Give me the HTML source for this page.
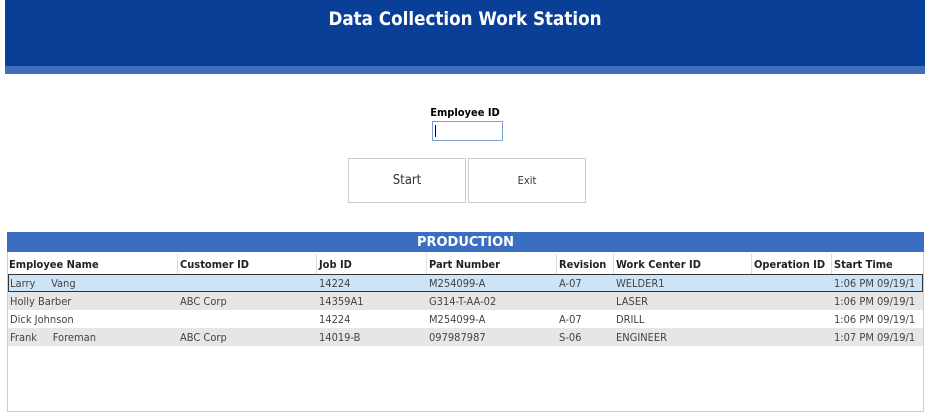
<!DOCTYPE html>
<html><head><style>
*{margin:0;padding:0;box-sizing:border-box}
body{width:930px;height:405px;background:#fff;position:relative;overflow:hidden;font-family:"DejaVu Sans","Liberation Sans",sans-serif}
.hdr{position:absolute;left:5px;top:0;width:920px;height:66px;background:#0a3f98}
.hdr2{position:absolute;left:5px;top:66px;width:920px;height:8px;background:#3f6ebf}
.title{position:absolute;left:0;width:930px;top:8px;text-align:center;color:#fff;font-size:19px;font-family:"DejaVu Sans Condensed","DejaVu Sans",sans-serif;font-weight:bold;transform:scaleX(0.98)}
.lbl{position:absolute;left:0;width:930px;top:106px;text-align:center;font-size:11px;font-weight:bold;font-family:"DejaVu Sans Condensed","DejaVu Sans",sans-serif}
.inp{position:absolute;left:432px;top:121px;width:71px;height:20px;border:1px solid #7aa0d0}
.inp:after{content:"";position:absolute;left:2px;top:3px;width:1px;height:12px;background:#000}
.btn{position:absolute;top:158px;width:118px;height:45px;border:1px solid #ccc;text-align:center;line-height:43px;font-family:"DejaVu Sans Condensed","DejaVu Sans",sans-serif;color:#333}
.panel{position:absolute;left:7px;top:232px;width:917px;height:180px;border:1px solid #ccc}
.pt{position:absolute;left:7px;top:232px;width:917px;height:20px;background:#3a6ec0;color:#fff;text-align:center;font-weight:bold;font-size:13px;line-height:21px}
.row{position:absolute;left:8px;width:915px;height:18px;font-size:11px;line-height:19px;color:#444;font-family:"DejaVu Sans Condensed","DejaVu Sans",sans-serif}
.row span{position:absolute;top:0;white-space:nowrap}
.h{font-weight:bold;color:#222;top:254px;height:20px;line-height:21px}
.h span{border-left:1px solid #ddd;padding-left:2px;margin-left:-3px}
</style></head><body>
<div class="hdr"></div><div class="hdr2"></div>
<div class="title">Data Collection Work Station</div>
<div class="lbl">Employee ID</div>
<div class="inp"></div>
<div class="btn" style="left:348px;font-size:13px">Start</div>
<div class="btn" style="left:468px;font-size:11px">Exit</div>
<div class="panel"></div>
<div class="pt">PRODUCTION</div>
<div class="row h"><span style="left:2px;border:0">Employee Name</span><span style="left:172px">Customer ID</span><span style="left:311px">Job ID</span><span style="left:421px">Part Number</span><span style="left:551px">Revision</span><span style="left:608px">Work Center ID</span><span style="left:746px">Operation ID</span><span style="left:826px">Start Time</span></div>
<div class="row" style="top:274px;background:#cde3f6;border:1px solid #333;line-height:17px"><span style="left:1px">Larry &nbsp;&nbsp;&nbsp;&nbsp;Vang</span><span style="left:310px">14224</span><span style="left:420px">M254099-A</span><span style="left:550px">A-07</span><span style="left:607px">WELDER1</span><span style="left:825px">1:06 PM 09/19/1</span></div>
<div class="row" style="top:292px;background:#e6e6e6"><span style="left:2px">Holly Barber</span><span style="left:172px">ABC Corp</span><span style="left:311px">14359A1</span><span style="left:421px">G314-T-AA-02</span><span style="left:608px">LASER</span><span style="left:826px">1:06 PM 09/19/1</span></div>
<div class="row" style="top:310px"><span style="left:2px">Dick Johnson</span><span style="left:311px">14224</span><span style="left:421px">M254099-A</span><span style="left:551px">A-07</span><span style="left:608px">DRILL</span><span style="left:826px">1:06 PM 09/19/1</span></div>
<div class="row" style="top:328px;background:#e6e6e6"><span style="left:2px">Frank &nbsp;&nbsp;&nbsp;&nbsp;Foreman</span><span style="left:172px">ABC Corp</span><span style="left:311px">14019-B</span><span style="left:421px">097987987</span><span style="left:551px">S-06</span><span style="left:608px">ENGINEER</span><span style="left:826px">1:07 PM 09/19/1</span></div>
</body></html>
